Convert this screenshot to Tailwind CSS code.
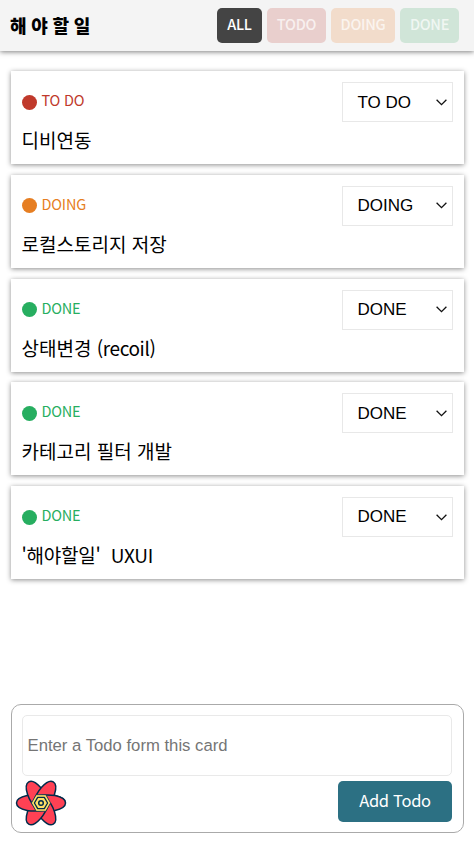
<!DOCTYPE html>
<html lang="ko">
<head>
<meta charset="utf-8">
<title>해야할일</title>
<script src="https://cdn.jsdelivr.net/npm/@tailwindcss/browser@4"></script>
</head>
<body class="bg-white">
<div class="flex h-[843px] w-[474px] flex-col overflow-hidden bg-white font-['Noto_Sans_CJK_KR','Noto_Sans',sans-serif] text-black">
  <header class="flex h-[51px] shrink-0 items-start justify-between bg-[#f4f4f4] pl-[10px] pr-[15px] pt-[8px] shadow-[0_1px_5px_rgba(0,0,0,0.5)]">
    <h1 class="mt-[3px] whitespace-nowrap text-[18px] font-black leading-[29px] tracking-[4.7px]">해야할일</h1>
    <nav class="flex gap-[5px] text-[14.5px] font-medium leading-[32px] tracking-[-0.3px] text-white">
      <button class="h-[35px] w-[45px] rounded-[5px] bg-[#444444] pb-[3px]">ALL</button>
      <button class="h-[35px] w-[59px] rounded-[5px] bg-[#e9cfcd] pb-[3px] text-white/70">TODO</button>
      <button class="h-[35px] w-[64px] rounded-[5px] bg-[#f2dccb] pb-[3px] text-white/70">DOING</button>
      <button class="h-[35px] w-[59px] rounded-[5px] bg-[#d0e5d8] pb-[3px] text-white/70">DONE</button>
    </nav>
  </header>
  <main id="list" class="flex flex-col gap-[10.7px] pl-[10.5px] pr-[10.5px] pt-[20.3px]"></main>
  <form class="mx-[10.5px] mb-[10.5px] mt-auto flex h-[128.5px] shrink-0 flex-col rounded-[10px] border border-[#aaaaaa] px-[10.5px] pt-[10px]">
    <input class="h-[61px] w-full shrink-0 rounded-[5px] border border-[#e9e9e9] px-[4.5px] font-['Liberation_Sans',sans-serif] text-[16.7px] placeholder:text-[#757575]" placeholder="Enter a Todo form this card">
    <div class="mt-[5px] flex justify-between">
      <svg class="-ml-[7.5px] -mt-[3px] h-[50px] w-[52px]" viewBox="-26 -25 52 50">
        <defs>
          <path id="petal" d="M-4 -7C2 -8.2 9 -8.4 14 -7.4C20.5 -6 24.5 -3.6 24.5 0C24.5 3.6 20.5 6 14 7.4C8 8.2 1 7 -4 5Z"/>
          <clipPath id="half"><rect x="-6" y="-12" width="34" height="12"/></clipPath>
        </defs>
        <g fill="#ff4154" stroke="#002c4b" stroke-width="1.5" stroke-linejoin="round">
          <use href="#petal"/><use href="#petal" transform="rotate(60)"/><use href="#petal" transform="rotate(120)"/><use href="#petal" transform="rotate(180)"/><use href="#petal" transform="rotate(240)"/><use href="#petal" transform="rotate(300)"/>
          <g clip-path="url(#half)"><use href="#petal"/></g>
        </g>
        <g stroke-linejoin="round">
          <path d="M-9.6 0L-4.8 -8.3H4.8L9.6 0L4.8 8.3H-4.8Z" fill="#ffe066" stroke="#002c4b" stroke-width=".8"/>
          <path d="M-6.6 0L-3.3 -5.7H3.3L6.6 0L3.3 5.7H-3.3Z" fill="#ffe066" stroke="#002c4b" stroke-width="1.3"/>
          <circle r="2.3" fill="#ffe066" stroke="#002c4b" stroke-width="1.5"/>
        </g>
      </svg>
      <button type="button" class="h-[41px] w-[114px] rounded-[5px] bg-[#2c7083] pb-[3px] text-[16.5px] leading-[38px] tracking-[-0.3px] text-white">Add Todo</button>
    </div>
  </form>
</div>
<script>
const items = [
  ['TO DO', '디비연동', 'text-[#c0392b]'],
  ['DOING', '로컬스토리지 저장', 'text-[#e67e22]'],
  ['DONE', '상태변경 <span class="tracking-[-0.4px]">(recoil)</span>', 'text-[#27ae60]'],
  ['DONE', '카테고리 필터 개발', 'text-[#27ae60]'],
  ['DONE', '<span class="tracking-[-0.25px]">\'해야할일\'\u00a0 UXUI</span>', 'text-[#27ae60]']
];
document.getElementById('list').innerHTML = items.map(([state, title, color]) => `
  <article class="flex h-[93px] justify-between bg-white pl-[11px] pr-[11px] pt-[11px] shadow-[0_1px_5px_rgba(0,0,0,0.45)]">
    <div>
      <div class="mt-[9px] flex h-[22px] items-center gap-[5px] ${color}">
        <span class="size-[15px] rounded-full bg-current"></span>
        <span class="-mt-[4px] text-[14.5px] leading-[22px] tracking-[-0.2px]">${state}</span>
      </div>
      <p class="mt-[13px] whitespace-nowrap text-[19px] leading-[28px]">${title}</p>
    </div>
    <div class="flex h-[40px] w-[111px] items-center justify-between border border-[#e8e8e8] pl-[15px] pr-[5px] font-['Liberation_Sans',sans-serif] text-[17px]">
      <span>${state}</span>
      <svg class="h-[7px] w-[11px]" viewBox="0 0 11 7" fill="none" stroke="#111" stroke-width="1.3"><path d="M.6 .8L5.5 5.7L10.4 .8"/></svg>
    </div>
  </article>`).join('');
</script>
</body>
</html>
